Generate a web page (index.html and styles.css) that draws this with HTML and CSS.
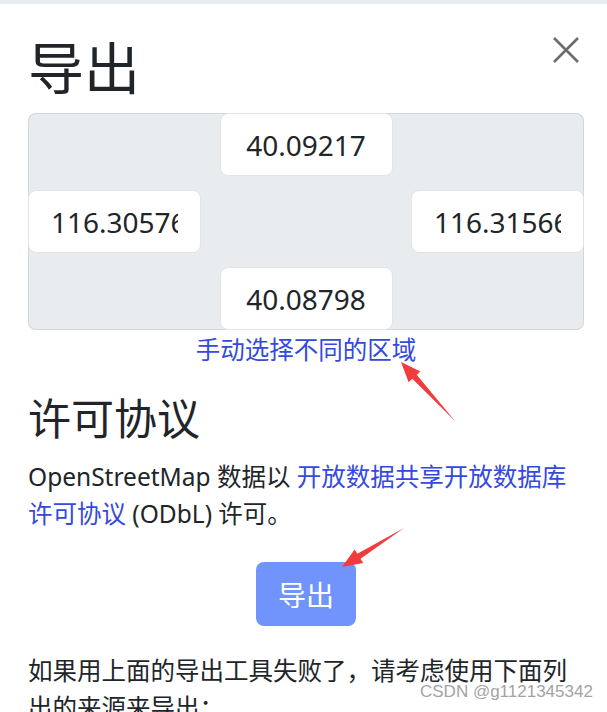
FILE: index.html
```html
<!DOCTYPE html>
<html lang="zh-CN">
<head>
    <meta charset="UTF-8">
    <meta name="viewport" content="width=device-width, initial-scale=1.0">
    <title>导出</title>
    <link rel="stylesheet" href="styles.css">
</head>
<body>
<div class="top-bar"></div>
<div class="panel">
    <header class="panel-header">
        <h1>导出</h1>
        <button type="button" class="close" aria-label="关闭">
            <svg width="26" height="26" viewBox="0 0 26 26">
                <path d="M1 1 L25 25 M25 1 L1 25" stroke="#6c6c6c" stroke-width="2.6" fill="none"/>
            </svg>
        </button>
    </header>

    <div class="bbox">
        <input class="coord north" type="text" value="40.09217">
        <input class="coord west" type="text" value="116.30576">
        <input class="coord east" type="text" value="116.31566">
        <input class="coord south" type="text" value="40.08798">
    </div>
    <div class="manual">
        <a href="#">手动选择不同的区域</a>
    </div>

    <h2>许可协议</h2>
    <p class="licence">OpenStreetMap 数据以 <a href="#">开放数据共享开放数据库许可协议</a> (ODbL) 许可。</p>

    <div class="actions">
        <button type="button" class="export-btn">导出</button>
    </div>

    <p class="sources">如果用上面的导出工具失败了，请考虑使用下面列出的来源来导出：</p>
</div>

<!-- screenshot annotations -->
<svg class="marks" width="607" height="712" viewBox="0 0 607 712">
    <polygon points="401,362 420.4,371.4 416.7,374.8 455,421 412.3,378.8 408.6,382.2" fill="#f03c3c"/>
    <polygon points="342,567 363.2,563.1 360.5,558.8 404,528 357.3,553.8 354.6,549.5" fill="#f03c3c"/>
</svg>
<div class="watermark">CSDN @g1121345342</div>
</body>
</html>
```

FILE: styles.css
```css
body {
    margin: 0;
    font-family: "Noto Sans", "Noto Sans CJK SC", sans-serif;
    font-size: 24.5px;
    line-height: 1.5;
    color: #212529;
    background: #fff;
    position: relative;
    height: 712px;
    overflow: hidden;
}
a {
    color: #3349e0;
    text-decoration: none;
}
.top-bar {
    height: 4px;
    background-color: #e9ecef;
}
.panel {
    padding: 0 23px 0 28px;
}
.panel-header {
    display: flex;
    justify-content: space-between;
    align-items: flex-start;
}
.panel-header h1 {
    margin: 30px 0 12px 0;
    font-size: 56px;
    font-weight: 400;
    line-height: 67px;
}
.close {
    margin: 33px 5px 0 0;
    padding: 0;
    border: 0;
    background: none;
    width: 26px;
    height: 26px;
}
.close svg {
    display: block;
}

/* bounding box inputs */
.bbox {
    display: grid;
    grid-template-columns: 173px 1fr 173px 1fr 173px;
    grid-template-rows: 63px 63px 63px;
    row-gap: 14px;
    background-color: #e9ecef;
    border-radius: 8px;
    box-shadow: inset 0 0 0 1px #d3d7db;
}
.coord {
    box-sizing: border-box;
    width: 100%;
    height: 63px;
    padding: 0 22px;
    border: 1px solid #e2e5e8;
    border-radius: 8px;
    background: #fff;
    font-family: "Noto Sans", sans-serif;
    font-size: 28px;
    color: #212529;
    text-align: center;
    outline: none;
}
.north { grid-column: 3; grid-row: 1; }
.west  { grid-column: 1; grid-row: 2; }
.east  { grid-column: 5; grid-row: 2; }
.south { grid-column: 3; grid-row: 3; }

.manual {
    margin-top: 2px;
    text-align: center;
}
h2 {
    margin: 24px 0 15px 0;
    font-size: 43px;
    font-weight: 400;
    line-height: 1.2;
}
p {
    margin: 0;
}
.actions {
    margin-top: 29px;
    text-align: center;
}
.export-btn {
    width: 100px;
    height: 64px;
    border: 0;
    border-radius: 8px;
    background-color: #7094fc;
    color: #fff;
    font-family: "Noto Sans CJK SC", sans-serif;
    font-size: 28px;
    padding: 0;
}
.sources {
    margin-top: 27px;
}

.marks {
    position: absolute;
    top: 0;
    left: 0;
    pointer-events: none;
}
.watermark {
    position: absolute;
    left: 420px;
    top: 680px;
    font-family: "Liberation Sans", sans-serif;
    font-size: 17px;
    line-height: 24px;
    color: #a3a3a3;
    text-shadow: 0 0 2px #fff;
}
```
